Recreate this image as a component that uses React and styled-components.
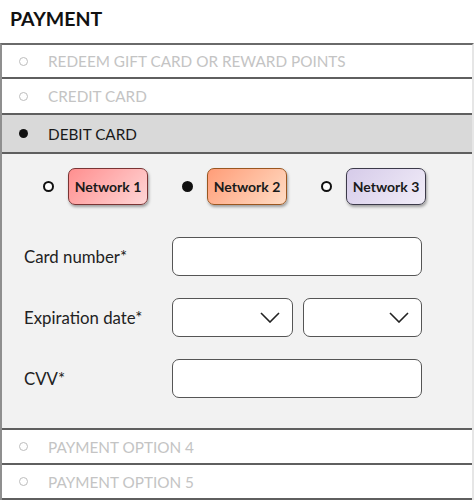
import React from "react";
import styled, { createGlobalStyle } from "styled-components";

const Global = createGlobalStyle`
  html, body { margin: 0; padding: 0; background: #ffffff; }
  body { font-family: Lato, "Open Sans", sans-serif; width: 474px; }
`;

const Page = styled.div`
  width: 474px;
  height: 501px;
  overflow: hidden;
  background: #fff;
`;

const Title = styled.h1`
  margin: 0;
  height: 43px;
  box-sizing: border-box;
  padding: 0 0 6px 10px;
  display: flex;
  align-items: center;
  font-size: 19.5px;
  font-weight: 700;
  color: #111;
`;

const List = styled.div`
  border-top: 2px solid #6a6a6a;
  border-left: 2px solid #8f8f8f;
  border-right: 2px solid #e6e6e6;
`;

const Row = styled.div`
  height: ${(p) => p.$h}px;
  box-sizing: border-box;
  display: flex;
  align-items: center;
  gap: 20px;
  padding-left: 17px;
  border-bottom: 2px solid #5f5f5f;
  background: ${(p) => (p.$active ? "#d9d9d9" : "#ffffff")};
  color: ${(p) => (p.$active ? "#1a1a1a" : "#c4c4c4")};
  font-size: 15.3px;
`;

const Bullet = styled.span`
  width: 9px;
  height: 9px;
  box-sizing: border-box;
  border-radius: 50%;
  flex: none;
  border: ${(p) => (p.$filled ? "none" : "1.5px solid #bdbdbd")};
  background: ${(p) => (p.$filled ? "#111" : "transparent")};
`;

const Panel = styled.div`
  background: #f2f2f2;
  border-bottom: 2px solid #5f5f5f;
  padding: 14px 0 30px 0;
  display: flex;
  flex-direction: column;
`;

const Networks = styled.div`
  display: flex;
  align-items: center;
  gap: 34px;
  padding-left: 41px;
`;

const NetGroup = styled.div`
  display: flex;
  align-items: center;
  gap: 14px;
`;

const Radio = styled.span`
  width: 11px;
  height: 11px;
  box-sizing: border-box;
  border-radius: 50%;
  border: 2px solid #111;
  background: ${(p) => (p.$filled ? "#111" : "#fff")};
  flex: none;
`;

const NetButton = styled.div`
  width: 80px;
  height: 37px;
  box-sizing: border-box;
  border-radius: 7px;
  border: 1.5px solid ${(p) => p.$border};
  background: linear-gradient(135deg, ${(p) => p.$from}, ${(p) => p.$to});
  box-shadow: 1px 2px 3px rgba(0, 0, 0, 0.35);
  display: flex;
  align-items: center;
  justify-content: center;
  font-size: 14px;
  font-weight: 700;
  color: #1a1a1a;
`;

const Form = styled.div`
  display: flex;
  flex-direction: column;
  gap: 22px;
  margin-top: 32px;
`;

const FormRow = styled.div`
  display: grid;
  grid-template-columns: 148px 250px;
  align-items: center;
  padding-left: 22px;
`;

const Label = styled.label`
  font-size: 16.8px;
  color: #222;
`;

const Field = styled.div`
  height: 39px;
  box-sizing: border-box;
  border: 1.5px solid #555;
  border-radius: 7px;
  background: #fff;
`;

const Selects = styled.div`
  display: grid;
  grid-template-columns: 121px 119px;
  gap: 10px;
`;

const Select = styled(Field)`
  display: flex;
  align-items: center;
  justify-content: flex-end;
  padding-right: 12px;
`;

const Chevron = () => (
  <svg width="20" height="11" viewBox="0 0 20 11" fill="none">
    <path d="M1 1 L10 10 L19 1" stroke="#222" strokeWidth="1.6" />
  </svg>
);

const options = [
  { label: "REDEEM GIFT CARD OR REWARD POINTS", h: 34 },
  { label: "CREDIT CARD", h: 36 },
];

export default function App() {
  return (
    <Page>
      <Global />
      <Title>PAYMENT</Title>
      <List>
        {options.map((o) => (
          <Row key={o.label} $h={o.h}>
            <Bullet />
            {o.label}
          </Row>
        ))}
        <Row $h={39} $active>
          <Bullet $filled />
          DEBIT CARD
        </Row>
        <Panel>
          <Networks>
            <NetGroup>
              <Radio />
              <NetButton $from="#ff8f8f" $to="#ffd6d6" $border="#7a3434">
                Network 1
              </NetButton>
            </NetGroup>
            <NetGroup>
              <Radio $filled />
              <NetButton $from="#ff9d78" $to="#ffdcc4" $border="#9a5620">
                Network 2
              </NetButton>
            </NetGroup>
            <NetGroup>
              <Radio />
              <NetButton $from="#d6cbe9" $to="#f1edf8" $border="#3c3a4a">
                Network 3
              </NetButton>
            </NetGroup>
          </Networks>
          <Form>
            <FormRow>
              <Label>Card number*</Label>
              <Field />
            </FormRow>
            <FormRow>
              <Label>Expiration date*</Label>
              <Selects>
                <Select>
                  <Chevron />
                </Select>
                <Select>
                  <Chevron />
                </Select>
              </Selects>
            </FormRow>
            <FormRow>
              <Label>CVV*</Label>
              <Field />
            </FormRow>
          </Form>
        </Panel>
        <Row $h={35}>
          <Bullet />
          PAYMENT OPTION 4
        </Row>
        <Row $h={35}>
          <Bullet />
          PAYMENT OPTION 5
        </Row>
      </List>
    </Page>
  );
}
